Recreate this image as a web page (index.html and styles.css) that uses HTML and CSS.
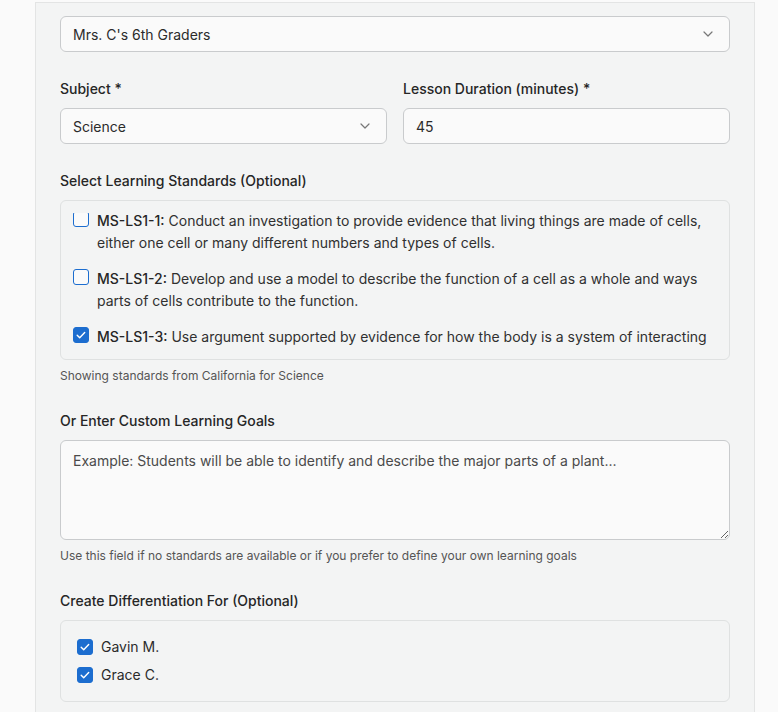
FILE: index.html
```html
<!DOCTYPE html>
<html>
<head>
  <title>Lesson Planner</title>
  <link rel="stylesheet" href="styles.css">
</head>
<body>
  <div class="panel">
    <!-- Class -->
    <div class="field">
      <select class="control select">
        <option>Mrs. C's 6th Graders</option>
      </select>
    </div>

    <!-- Subject + duration -->
    <div class="row">
      <div class="field">
        <label class="field-label">Subject *</label>
        <select class="control select">
          <option>Science</option>
        </select>
      </div>
      <div class="field">
        <label class="field-label">Lesson Duration (minutes) *</label>
        <input class="control" type="text" value="45">
      </div>
    </div>

    <!-- Standards -->
    <div class="field">
      <label class="field-label">Select Learning Standards (Optional)</label>
      <div class="standards">
        <div class="standards-list" id="standards-list">
          <label class="standard">
            <input type="checkbox" class="check">
            <span><b>MS-LS1-1:</b> Conduct an investigation to provide evidence that living things are made of cells, either one cell or many different numbers and types of cells.</span>
          </label>
          <label class="standard">
            <input type="checkbox" class="check">
            <span><b>MS-LS1-2:</b> Develop and use a model to describe the function of a cell as a whole and ways parts of cells contribute to the function.</span>
          </label>
          <label class="standard">
            <input type="checkbox" class="check" checked>
            <span><b>MS-LS1-3:</b> Use argument supported by evidence for how the body is a system of interacting subsystems composed of groups of cells.</span>
          </label>
          <label class="standard">
            <input type="checkbox" class="check">
            <span><b>MS-LS1-8:</b> Gather and synthesize information that sensory receptors respond to stimuli by sending messages to the brain.</span>
          </label>
        </div>
      </div>
      <p class="help">Showing standards from California for Science</p>
    </div>

    <!-- Custom goals -->
    <div class="field">
      <label class="field-label">Or Enter Custom Learning Goals</label>
      <textarea class="control goals" placeholder="Example: Students will be able to identify and describe the major parts of a plant..."></textarea>
      <p class="help">Use this field if no standards are available or if you prefer to define your own learning goals</p>
    </div>

    <!-- Differentiation -->
    <div class="field">
      <label class="field-label">Create Differentiation For (Optional)</label>
      <div class="students">
        <label class="student">
          <input type="checkbox" class="check" checked>
          <span>Gavin M.</span>
        </label>
        <label class="student">
          <input type="checkbox" class="check" checked>
          <span>Grace C.</span>
        </label>
      </div>
    </div>
  </div>

  <script>
    // keep the standards list scrolled a little, as in the app
    document.getElementById('standards-list').scrollTop = 3;
  </script>
</body>
</html>
```

FILE: styles.css
```css
body {
  margin: 0;
  background-color: #fafafa;
  font-family: Inter, 'Noto Sans', sans-serif;
  font-size: 14px;
  color: #2b2b2b;
}

.panel {
  width: 720px;
  box-sizing: border-box;
  margin: 2px 0 0 35px;
  padding: 13px 24px 40px;
  background-color: #f3f4f4;
  border: 1px solid #e3e4e4;
  border-bottom: none;
  display: flex;
  flex-direction: column;
  gap: 27px;
}

.field {
  display: flex;
  flex-direction: column;
  min-width: 0;
}

.row {
  display: grid;
  grid-template-columns: 1fr 1fr;
  gap: 16px;
}

.field-label {
  font-weight: 500;
  line-height: 20px;
  margin-bottom: 9px;
  color: #262626;
}

.control {
  box-sizing: border-box;
  width: 100%;
  height: 36px;
  margin: 0;
  padding: 0 12px;
  border: 1px solid #c9cbcd;
  border-radius: 6px;
  background-color: #fafafa;
  font-family: inherit;
  font-size: 14px;
  color: #2b2b2b;
  outline: none;
}

.select {
  appearance: none;
  background-image: url("data:image/svg+xml,%3Csvg xmlns='http://www.w3.org/2000/svg' width='10' height='6' viewBox='0 0 10 6'%3E%3Cpath d='M1 1l4 4 4-4' fill='none' stroke='%23777' stroke-width='1.2' stroke-linecap='round' stroke-linejoin='round'/%3E%3C/svg%3E");
  background-repeat: no-repeat;
  background-position: right 16px center;
  background-size: 10px 6px;
}

.standards {
  border: 1px solid #dfe1e1;
  border-radius: 6px;
  padding: 12px;
}

.standards-list {
  height: 134px;
  overflow-y: auto;
  scrollbar-width: none;
  display: flex;
  flex-direction: column;
  gap: 14px;
}

.standard {
  display: flex;
  align-items: flex-start;
  gap: 8px;
  line-height: 22px;
  color: #303030;
}

.standard b {
  font-weight: 500;
  color: #262626;
}

.check {
  appearance: none;
  flex-shrink: 0;
  width: 16px;
  height: 16px;
  margin: 0;
  border: 1.5px solid #1c6dcf;
  border-radius: 3px;
  background-color: #fafafa;
}

.standard .check {
  margin-top: 1px;
}

.check:checked {
  background-color: #1c6dcf;
  background-image: url("data:image/svg+xml,%3Csvg xmlns='http://www.w3.org/2000/svg' width='16' height='16' viewBox='0 0 16 16'%3E%3Cpath d='M4.2 8.3l2.5 2.5 5-5.3' fill='none' stroke='white' stroke-width='1.4' stroke-linecap='round' stroke-linejoin='round'/%3E%3C/svg%3E");
  background-repeat: no-repeat;
  background-position: center;
  background-size: 16px 16px;
}

.help {
  margin: 8px 0 0;
  font-size: 12px;
  line-height: 16px;
  color: #555;
}

.goals {
  height: 100px;
  padding: 10px 12px;
  line-height: 20px;
  resize: vertical;
}

.goals::placeholder {
  color: #4a4a4a;
}

.students {
  border: 1px solid #dfe1e1;
  border-radius: 6px;
  padding: 16px;
  display: flex;
  flex-direction: column;
  gap: 8px;
}

.student {
  display: flex;
  align-items: center;
  gap: 8px;
  line-height: 20px;
}
```
